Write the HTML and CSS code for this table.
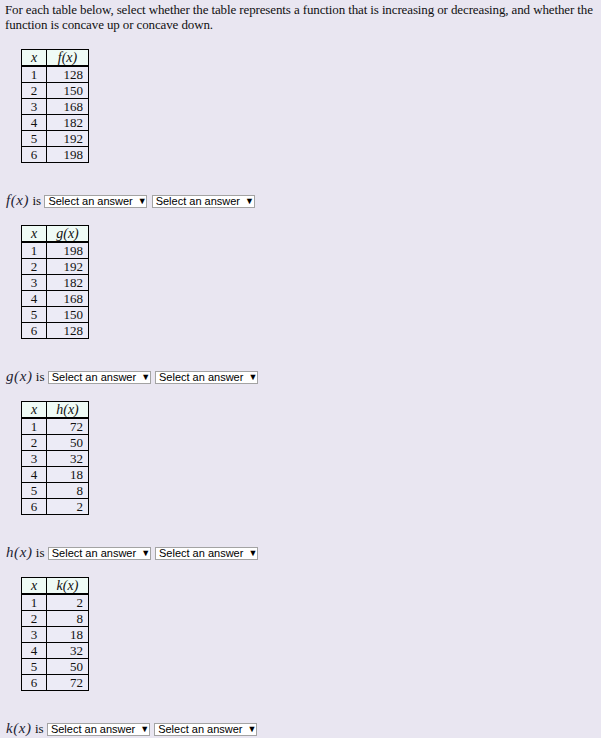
FILE: index.html
```html
<!DOCTYPE html>
<html>
<head>
<meta charset="utf-8">
<link rel="stylesheet" href="styles.css">
</head>
<body>
<p class="intro">For each table below, select whether the table represents a function that is increasing or decreasing, and whether the function is concave up or concave down.</p>

<div class="block">
  <table class="vals">
    <tr><th class="m">x</th><th class="m">f(x)</th></tr>
    <tr><td>1</td><td>128</td></tr>
    <tr><td>2</td><td>150</td></tr>
    <tr><td>3</td><td>168</td></tr>
    <tr><td>4</td><td>182</td></tr>
    <tr><td>5</td><td>192</td></tr>
    <tr><td>6</td><td>198</td></tr>
  </table>
  <div class="answer"><span class="m">f(x)</span> is <span class="sel">Select an answer<span class="arr">▼</span></span> <span class="sel">Select an answer<span class="arr">▼</span></span></div>
</div>

<div class="block">
  <table class="vals">
    <tr><th class="m">x</th><th class="m">g(x)</th></tr>
    <tr><td>1</td><td>198</td></tr>
    <tr><td>2</td><td>192</td></tr>
    <tr><td>3</td><td>182</td></tr>
    <tr><td>4</td><td>168</td></tr>
    <tr><td>5</td><td>150</td></tr>
    <tr><td>6</td><td>128</td></tr>
  </table>
  <div class="answer"><span class="m">g(x)</span> is <span class="sel">Select an answer<span class="arr">▼</span></span> <span class="sel">Select an answer<span class="arr">▼</span></span></div>
</div>

<div class="block">
  <table class="vals">
    <tr><th class="m">x</th><th class="m">h(x)</th></tr>
    <tr><td>1</td><td>72</td></tr>
    <tr><td>2</td><td>50</td></tr>
    <tr><td>3</td><td>32</td></tr>
    <tr><td>4</td><td>18</td></tr>
    <tr><td>5</td><td>8</td></tr>
    <tr><td>6</td><td>2</td></tr>
  </table>
  <div class="answer"><span class="m">h(x)</span> is <span class="sel">Select an answer<span class="arr">▼</span></span> <span class="sel">Select an answer<span class="arr">▼</span></span></div>
</div>

<div class="block">
  <table class="vals">
    <tr><th class="m">x</th><th class="m">k(x)</th></tr>
    <tr><td>1</td><td>2</td></tr>
    <tr><td>2</td><td>8</td></tr>
    <tr><td>3</td><td>18</td></tr>
    <tr><td>4</td><td>32</td></tr>
    <tr><td>5</td><td>50</td></tr>
    <tr><td>6</td><td>72</td></tr>
  </table>
  <div class="answer"><span class="m">k(x)</span> is <span class="sel">Select an answer<span class="arr">▼</span></span> <span class="sel">Select an answer<span class="arr">▼</span></span></div>
</div>
</body>
</html>
```

FILE: styles.css
```css
html, body {
  margin: 0;
  padding: 0;
  background: #e9e6f1;
}
body {
  padding: 0 0 0 5px;
  font-family: "Liberation Serif", "Times New Roman", serif;
  font-size: 13px;
  line-height: 15px;
  color: #111;
}
.intro {
  margin: 0;
  padding-top: 2px;
  letter-spacing: -0.12px;
}
.block .vals {
  margin-top: 17px;
}
.block + .block .vals {
  margin-top: 16px;
}
.vals {
  margin-left: 16px;
  border-collapse: collapse;
  border: 1px solid #000;
}
.vals th, .vals td {
  border: 1px solid #000;
  height: 15px;
  padding: 0;
  line-height: 15px;
  font-family: "Liberation Serif", "Times New Roman", serif;
  font-size: 13px;
  color: #111;
}
.vals th {
  background: #effbf6;
  border-bottom: 2px solid #000;
  font-weight: normal;
  text-align: center;
  font-size: 14px;
}
.vals td {
  background: #ecebf6;
}
.vals td:first-child, .vals th:first-child {
  width: 24px;
  text-align: center;
}
.vals td:last-child, .vals th:last-child {
  width: 41px;
}
.vals td:last-child {
  text-align: right;
  padding-right: 5px;
  width: 36px;
}
.m {
  font-style: italic;
  color: #1d1d33;
}
.answer .m {
  font-size: 15px;
  letter-spacing: 0.6px;
  margin-left: 1px;
}
.answer {
  margin-top: 28px;
  height: 18px;
  line-height: 18px;
  white-space: nowrap;
}
.sel {
  display: inline-block;
  vertical-align: middle;
  box-sizing: border-box;
  width: 103px;
  height: 13px;
  border: 1px solid #a3a3a3;
  background: #fff;
  font-family: "Liberation Sans", Arial, sans-serif;
  font-size: 11px;
  line-height: 11px;
  padding: 0 2px 0 3px;
  color: #000;
  margin-top: -2px;
  margin-right: 1px;
  white-space: nowrap;
  overflow: hidden;
}
.sel .arr {
  font-size: 9px;
  margin-left: 5px;
  vertical-align: 1px;
}
```
